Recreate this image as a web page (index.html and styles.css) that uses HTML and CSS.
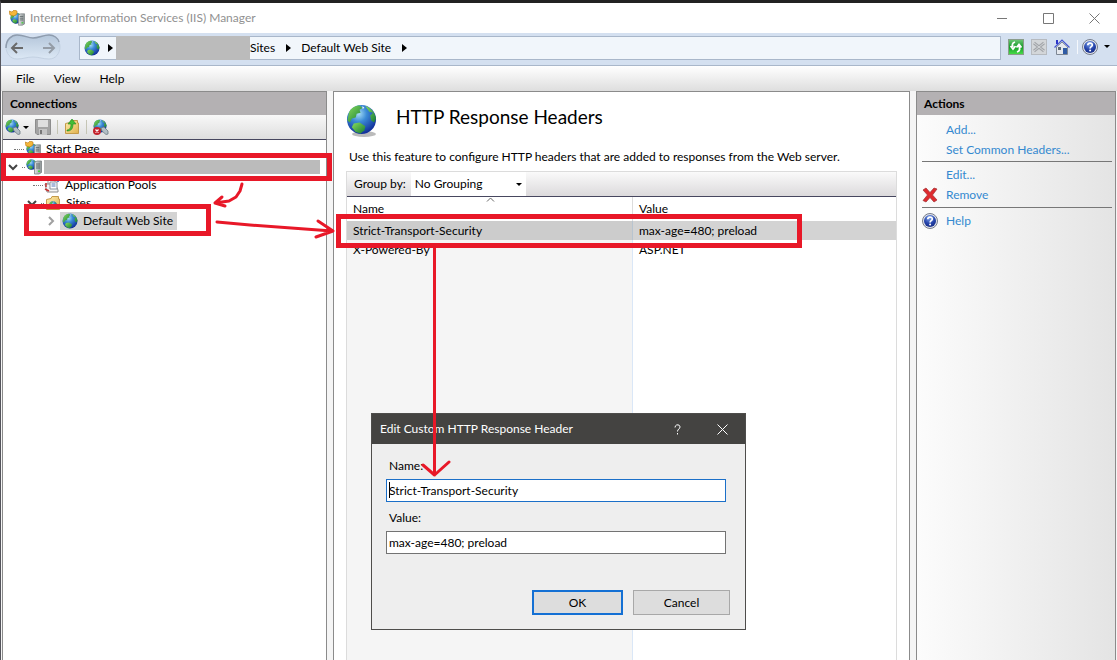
FILE: index.html
```html
<!DOCTYPE html>
<html lang="en">
<head>
    <meta charset="utf-8">
    <meta name="viewport" content="width=device-width, initial-scale=1.0">
    <title>Internet Information Services (IIS) Manager</title>
    <link rel="stylesheet" href="styles.css">
</head>
<body>
    <!-- shared icons -->
    <svg class="defs" aria-hidden="true">
        <defs>
            <radialGradient id="sea" cx="40%" cy="30%" r="70%">
                <stop offset="0" stop-color="#a8def5"/>
                <stop offset=".4" stop-color="#3b8bd6"/>
                <stop offset="1" stop-color="#12309a"/>
            </radialGradient>
            <linearGradient id="leaf" x1="0" y1="0" x2="1" y2="1">
                <stop offset="0" stop-color="#8ade5c"/>
                <stop offset="1" stop-color="#147a35"/>
            </linearGradient>
            <linearGradient id="case" x1="0" x2="1" y1="0" y2="0">
                <stop offset="0" stop-color="#dfe3e4"/>
                <stop offset="1" stop-color="#8b9394"/>
            </linearGradient>
            <linearGradient id="folder" x1="0" x2="1" y1="0" y2="1">
                <stop offset="0" stop-color="#fff0b0"/>
                <stop offset="1" stop-color="#e0b04c"/>
            </linearGradient>
            <radialGradient id="ball" cx="45%" cy="25%" r="75%">
                <stop offset="0" stop-color="#7fa5ec"/>
                <stop offset=".6" stop-color="#2746ad"/>
                <stop offset="1" stop-color="#152c85"/>
            </radialGradient>
            <linearGradient id="green" x1="0" x2="0" y1="0" y2="1">
                <stop offset="0" stop-color="#6fc878"/>
                <stop offset=".5" stop-color="#149a28"/>
                <stop offset="1" stop-color="#4be04a"/>
            </linearGradient>
            <linearGradient id="swoosh" x1="0" x2="0" y1="0" y2="1">
                <stop offset="0" stop-color="#b4c6da"/>
                <stop offset="1" stop-color="#dce8f5"/>
            </linearGradient>
            <symbol id="globe" viewBox="0 0 32 32">
                <circle cx="16" cy="16" r="15" fill="url(#sea)"/>
                <path d="M3 9C5 4 10 1.500 14 1.500L17 4 14 6 15 9 11 10 10 14 6 15 4 19 1.500 17Z" fill="url(#leaf)"/>
                <path d="M20 2C26 4 30 9 31 15L29 19 26 17 25 12 28 9 24 8Z" fill="url(#leaf)"/>
                <path d="M8 20L14 19 20 23 19 27 15 30.500 10 29 6 24Z" fill="url(#leaf)"/>
                <path d="M17 2L19 4 17 5Z" fill="#fff"/>
            </symbol>
            <symbol id="tower" viewBox="0 0 8 14">
                <path d="M.500 2L3 .500H7.500V12L5 13.500H.500Z" fill="url(#case)" stroke="#7b8284" stroke-width=".8"/>
                <path d="M2 3.500H6M2 5.500H6M2 7.500H6" stroke="#4c5557" stroke-width=".8"/>
                <rect x="4" y="10" width="2" height="1.500" fill="#45d43b"/>
            </symbol>
            <symbol id="iis" viewBox="0 0 16 16">
                <use href="#globe" x="1" y="2" width="12" height="12"/>
                <path d="M0 1L3 2 5 0 8 1 8 4 5 6 1 5Z" fill="#f5b73b" stroke="#b97814" stroke-width=".6"/>
                <use href="#tower" x="9" y="3" width="7" height="13"/>
            </symbol>
            <symbol id="server" viewBox="0 0 16 16">
                <use href="#globe" x="0" y="0" width="11" height="11"/>
                <use href="#tower" x="8" y="1" width="8" height="15"/>
            </symbol>
            <symbol id="help" viewBox="0 0 16 16">
                <circle cx="8" cy="8" r="7.500" fill="#e2e5ec" stroke="#767c8c"/>
                <circle cx="8" cy="8" r="6" fill="url(#ball)"/>
                <path d="M5.800 6.200C5.800 3.400 10.300 3.400 10.300 6C10.300 7.600 8.100 7.700 8.100 9.400" fill="none" stroke="#fff" stroke-width="1.700"/>
                <circle cx="8.100" cy="11.600" r="1" fill="#fff"/>
            </symbol>
            <symbol id="connect" viewBox="0 0 16 16">
                <use href="#globe" x="0" y="0" width="14" height="14"/>
                <path d="M8 9L11 8 15 12V15L13 15.500 9 12Z" fill="#b3bfc6" stroke="#6d7b84" stroke-width=".8"/>
            </symbol>
            <symbol id="folder-icon" viewBox="0 0 16 16">
                <path d="M1.500 4.500L6 3.500 7 1.500H13.500V4H14.500V14.500H1.500Z" fill="url(#folder)" stroke="#c49a4a"/>
            </symbol>
        </defs>
    </svg>

    <div class="window">
        <header class="titlebar">
            <svg class="icon"><use href="#iis"/></svg>
            <h1>Internet Information Services (IIS) Manager</h1>
            <div class="win-buttons">
                <button type="button" aria-label="Minimize"><svg viewBox="0 0 11 11"><path d="M0 5.500H10"/></svg></button>
                <button type="button" aria-label="Maximize"><svg viewBox="0 0 11 11"><path d="M.500 .500H10.500V10.500H.500Z"/></svg></button>
                <button type="button" aria-label="Close"><svg viewBox="0 0 11 11"><path d="M.500 .500L10.500 10.500M10.500 .500L.500 10.500"/></svg></button>
            </div>
        </header>

        <div class="navbar">
            <svg class="swoosh" viewBox="0 0 56 28">
                <path d="M12 1C20 1 22 4 28 4S38 1 44 1C51 1 55 7 55 13S51 25 44 25C38 25 34 23 28 23S18 25 12 25C5 25 1 19 1 13S5 1 12 1Z" fill="url(#swoosh)" stroke="#c3d1e2"/>
                <path d="M1 14C1 5 7 1 12 1C20 1 22 4 28 4S38 1 44 1C49 1 53 4 54 8" fill="none" stroke="#8e9cae" stroke-width="1.500"/>
                <path d="M18 14H7M12 9L7 14 12 19" fill="none" stroke="#6a6a6a" stroke-width="2"/>
                <path d="M38 14H49M44 9L49 14 44 19" fill="none" stroke="#949ca6" stroke-width="2"/>
            </svg>
            <nav class="address">
                <svg class="icon"><use href="#globe"/></svg>
                <span class="tri"></span>
                <span class="masked"></span>
                <a href="#">Sites</a>
                <span class="tri"></span>
                <a href="#">Default Web Site</a>
                <span class="tri"></span>
            </nav>
            <div class="nav-tools">
                <button type="button" aria-label="Refresh">
                    <svg class="icon" viewBox="0 0 16 16"><rect x=".500" y=".500" width="15" height="15" fill="url(#green)" stroke="#8a9c8a"/><path d="M7 3C4 4 4 6 5 8M2.500 7L5 10 7.500 7M9 13C12 12 12 10 11 7M8.500 8.500L11 5.500 13.500 8.500" fill="none" stroke="#fff" stroke-width="1.800"/></svg>
                </button>
                <button type="button" aria-label="Stop">
                    <svg class="icon" viewBox="0 0 16 16"><rect x=".500" y=".500" width="15" height="15" fill="#d3d6d9" stroke="#b6babf"/><path d="M3 4L13 12M13 4L3 12" stroke="#a3a6aa" stroke-width="3"/><path d="M3 4L13 12M13 4L3 12" stroke="#d3d6d9"/></svg>
                </button>
                <button type="button" aria-label="Home">
                    <svg class="icon" viewBox="0 0 16 16"><path d="M2 1H4V5H2Z" fill="#2b35c8"/><path d="M2.500 8L8 3 13.500 8V15.500H2.500Z" fill="#e4e8ee" stroke="#7d8794"/><path d="M.500 8.500L8 1 15.500 8.500" fill="none" stroke="#4656d0" stroke-width="1.200"/><rect x="4" y="8" width="3" height="3" fill="#5d6a76"/><rect x="9" y="9" width="4" height="6" fill="#2f5ba5"/></svg>
                </button>
                <span class="split"></span>
                <button type="button" class="wide" aria-label="Help">
                    <svg class="icon"><use href="#help"/></svg>
                    <span class="caret"></span>
                </button>
            </div>
        </div>

        <nav class="menubar">
            <a href="#">File</a>
            <a href="#">View</a>
            <a href="#">Help</a>
        </nav>

        <div class="panes">
            <section class="pane connections">
                <h2>Connections</h2>
                <div class="toolbar">
                    <button type="button" class="wide" aria-label="Connect">
                        <svg class="icon"><use href="#connect"/></svg>
                        <span class="caret"></span>
                    </button>
                    <button type="button" aria-label="Save">
                        <svg class="icon" viewBox="0 0 16 16"><path d="M.500 .500H15.500V15.500H2L.500 14Z" fill="#a3a3a3" stroke="#8d8d8d"/><path d="M3 1H13V8H3Z" fill="#dedede"/><path d="M4 10H12V16H4Z" fill="#c4c4c4"/><path d="M5 11H7V15H5Z" fill="#777"/></svg>
                    </button>
                    <span class="split"></span>
                    <button type="button" aria-label="Up">
                        <svg class="icon" viewBox="0 0 16 16"><use href="#folder-icon"/><path d="M3 11C6 11 7 8 7 5H4L8 0 12 5H9C9 10 7 12 3 12Z" fill="#43bd36" stroke="#26891e" stroke-width=".6"/></svg>
                    </button>
                    <span class="split"></span>
                    <button type="button" aria-label="Delete connection">
                        <svg class="icon" viewBox="0 0 16 16"><use href="#connect"/><circle cx="4" cy="12" r="4" fill="#c3212b"/><path d="M2.500 10.500L5.500 13.500M5.500 10.500L2.500 13.500" stroke="#fff" stroke-width="1.200"/></svg>
                    </button>
                </div>
                <ul class="tree">
                    <li class="level-1"><span class="dots"></span><svg class="icon"><use href="#iis"/></svg><span class="label">Start Page</span></li>
                    <li class="level-0">
                        <svg class="chevron open" viewBox="0 0 10 10"><path d="M1 3L5 7 9 3"/></svg>
                        <span class="dots short"></span><svg class="icon"><use href="#server"/></svg><span class="masked"></span>
                    </li>
                    <li class="level-2">
                        <span class="dots"></span>
                        <svg class="icon" viewBox="0 0 16 16"><path d="M4 1H11V9H4Z" fill="#fff" stroke="#9a9a9a"/><path d="M1 7H11L14 13V15H3Z" fill="#f4f4f4" stroke="#8b8b8b"/><path d="M6 5H13V12H6Z" fill="#fff" stroke="#8a93a0"/><path d="M7.500 7H11.500M7.500 9H11.500" stroke="#5576b8"/><path d="M10 2H14V5" fill="none" stroke="#2f57b5" stroke-width="1.500"/><path d="M1 12L5 14M2 6V10" stroke="#c63434" stroke-width="1.500"/></svg>
                        <span class="label">Application Pools</span>
                    </li>
                    <li class="level-2b">
                        <svg class="chevron open" viewBox="0 0 10 10"><path d="M1 3L5 7 9 3"/></svg>
                        <span class="dots short"></span><svg class="icon" viewBox="0 0 16 16"><use href="#folder-icon"/><use href="#globe" x="4" y="6" width="8" height="8"/></svg><span class="label">Sites</span>
                    </li>
                    <li class="level-3">
                        <svg class="chevron" viewBox="0 0 10 10"><path d="M3 1L7 5 3 9"/></svg>
                        <a class="selected" href="#"><svg class="icon"><use href="#globe"/></svg><span class="label">Default Web Site</span></a>
                    </li>
                </ul>
            </section>

            <main class="pane feature">
                <div class="feature-head">
                    <svg class="big-icon" viewBox="0 0 32 34"><ellipse cx="18" cy="30" rx="12" ry="3" fill="#bbb"/><use href="#globe" x="0" y="0" width="31" height="31"/></svg>
                    <h2>HTTP Response Headers</h2>
                </div>
                <p>Use this feature to configure HTTP headers that are added to responses from the Web server.</p>
                <div class="list">
                    <div class="group-bar">
                        <label for="group">Group by:</label>
                        <span class="pick">
                            <select id="group"><option>No Grouping</option></select>
                            <span class="caret"></span>
                        </span>
                    </div>
                    <table>
                        <thead>
                            <tr><th class="sorted">Name<svg class="sort" viewBox="0 0 9 5"><path d="M1 4.500L4.500 1 8 4.500"/></svg></th><th>Value</th></tr>
                        </thead>
                        <tbody>
                            <tr class="active"><td>Strict-Transport-Security</td><td>max-age=480; preload</td></tr>
                            <tr><td>X-Powered-By</td><td>ASP.NET</td></tr>
                            <tr class="filler"><td></td><td></td></tr>
                        </tbody>
                    </table>
                </div>
            </main>

            <aside class="pane actions">
                <h2>Actions</h2>
                <ul>
                    <li><a href="#">Add...</a></li>
                    <li><a href="#">Set Common Headers...</a></li>
                </ul>
                <ul>
                    <li><a href="#">Edit...</a></li>
                    <li><svg class="icon" viewBox="0 0 16 16"><path d="M1 3L4 1 8 5.500 12 1 15 2 10.500 8 15 13 12 15 8 10.500 4 15 1 13.500 5.500 8Z" fill="#df2b2f" stroke="#9e3034" stroke-width=".7"/></svg><a href="#">Remove</a></li>
                </ul>
                <ul>
                    <li><svg class="icon"><use href="#help"/></svg><a href="#">Help</a></li>
                </ul>
            </aside>
        </div>
    </div>

    <!-- edit dialog, floats over the window -->
    <form class="dialog" role="dialog" aria-labelledby="dialog-title">
        <div class="dialog-title">
            <h2 id="dialog-title">Edit Custom HTTP Response Header</h2>
            <button type="button" aria-label="Help"><svg viewBox="0 0 11 11"><path d="M3 3.500C3 0 8 0 8 3C8 5 5.500 5 5.500 7.500M5.500 9V10.500"/></svg></button>
            <button type="button" aria-label="Close"><svg viewBox="0 0 11 11"><path d="M.500 .500L10.500 10.500M10.500 .500L.500 10.500"/></svg></button>
        </div>
        <div class="fields">
            <label for="name">Name:</label>
            <div class="field"><input class="focused" id="name" type="text" value="Strict-Transport-Security"><span class="cursor"></span></div>
            <label for="value">Value:</label>
            <div class="field"><input id="value" type="text" value="max-age=480; preload"></div>
        </div>
        <div class="dialog-buttons">
            <button type="button" class="ok">OK</button>
            <button type="button" class="cancel">Cancel</button>
        </div>
    </form>

    <!-- red marker drawing -->
    <svg class="marker" width="810" height="490" viewBox="0 0 810 490" aria-hidden="true">
        <rect x="3.500" y="155.500" width="326" height="23"/>
        <rect x="26.500" y="206.500" width="182" height="27"/>
        <rect x="338.500" y="216.500" width="461" height="29"/>
        <g class="thin">
            <path d="M242 184L240 191 236 197 229 201 215 203M222 197L215 203 225 206"/>
            <path d="M217 222L250 225 332 231M318 221L333 231 316 237"/>
            <path d="M434.500 247V475M423 465L434.500 475 449 462"/>
        </g>
    </svg>
</body>
</html>
```
FILE: styles.css
```css
* {
    margin: 0;
    padding: 0;
    box-sizing: border-box;
}

body {
    font: 12px/18px Lato, "Open Sans", sans-serif;
    color: #000;
    position: relative;
    overflow: hidden;
}

a {
    color: inherit;
    text-decoration: none;
}

ul {
    list-style: none;
}

button {
    border: 0;
    background: none;
    font: inherit;
    color: inherit;
    display: flex;
    align-items: center;
    justify-content: center;
}

.defs {
    position: absolute;
    width: 0;
    height: 0;
}

.icon {
    width: 16px;
    height: 16px;
    flex: none;
}

.masked {
    background: #bbb;
}

.caret {
    border: 3px solid transparent;
    border-top-color: #000;
    border-bottom: 0;
}

.tri {
    border: 4px solid transparent;
    border-left: 5px solid #000;
    border-right: 0;
}

.split {
    width: 1px;
    height: 14px;
    background: #c5c5b5;
}

/* window */
.window {
    height: 100vh;
    display: flex;
    flex-direction: column;
    border-top: 3px solid #222;
    border-left: 1px solid #55555c;
    background: #f5f5f5;
}

.titlebar {
    height: 30px;
    padding-left: 8px;
    display: flex;
    align-items: center;
    background: #fff;
    color: #919191;
}

.titlebar h1 {
    flex: 1;
    margin-left: 5px;
    font-size: 12px;
    font-weight: normal;
}

.win-buttons {
    display: flex;
}

.win-buttons button {
    width: 46px;
    height: 28px;
}

.win-buttons svg,
.dialog-title svg {
    width: 11px;
    height: 11px;
    fill: none;
    stroke: #777;
}

/* back/forward, address, tools */
.navbar {
    height: 33px;
    padding: 0 7px 2px 4px;
    display: flex;
    align-items: center;
    background: #d4e0f0;
    border-bottom: 1px solid #a9b7ca;
}

.swoosh {
    width: 56px;
    height: 28px;
    flex: none;
}

.address {
    flex: 1;
    height: 24px;
    margin: 0 7px 0 18px;
    padding-left: 4px;
    display: flex;
    align-items: center;
    background: #f1f6fb;
    border: 1px solid #a9b7ca;
}

.address .tri {
    margin: 0 3px 0 8px;
}

.address a + .tri {
    margin: 0 10px 0 11px;
}

.address .masked {
    width: 134px;
    height: 24px;
}

.nav-tools {
    display: flex;
    align-items: center;
    gap: 7px;
    padding-bottom: 3px;
}

.wide {
    gap: 6px;
}

.nav-tools .split {
    background: #f5f8fc;
    margin-right: -3px;
}

.menubar {
    height: 25px;
    padding-left: 15px;
    display: flex;
    align-items: center;
    gap: 19px;
    background: linear-gradient(#fff, #dedede);
}

/* three panes */
.panes {
    flex: 1;
    min-height: 0;
    padding: 0 1px;
    display: grid;
    grid-template-columns: 325px minmax(0, 1fr) 200px;
    gap: 6px;
}

.pane {
    border: 1px solid #8b8b8b;
    border-bottom: 0;
    background: #fff;
}

.connections > h2,
.actions > h2 {
    height: 23px;
    padding-left: 7px;
    background: #b4b1b3;
    font-size: 12px;
    line-height: 24px;
}

.toolbar {
    height: 25px;
    padding-left: 2px;
    display: flex;
    align-items: center;
    gap: 6px;
    background: linear-gradient(#f8f8f8, #dedede);
    border-bottom: 1px solid #47475f;
}

.toolbar .wide {
    gap: 2px;
}

.tree li {
    height: 18px;
    display: flex;
    align-items: center;
}

.tree .label {
    margin-left: 5px;
}

.dots {
    width: 10px;
    margin-right: 1px;
    border-top: 1px dotted #777;
}

.dots.short {
    width: 3px;
}

.chevron {
    width: 10px;
    height: 10px;
    margin-right: 4px;
    flex: none;
    fill: none;
    stroke: #a0a0a0;
    stroke-width: 2;
}

.chevron.open {
    stroke: #444;
}

.level-0 {
    padding-left: 5px;
}

.level-1 {
    padding-left: 11px;
}

.level-2 {
    padding-left: 30px;
}

.level-2b {
    padding-left: 24px;
}

.level-3 {
    padding-left: 43px;
}

.tree .masked {
    width: 276px;
    height: 14px;
    margin-left: 2px;
}

.selected {
    height: 18px;
    padding: 0 4px 0 2px;
    display: flex;
    align-items: center;
    background: #d3d3d3;
}

/* feature page */
.feature {
    padding: 12px 12px 0;
    display: flex;
    flex-direction: column;
}

.feature-head {
    display: flex;
    gap: 18px;
    height: 32px;
}

.big-icon {
    width: 32px;
    height: 34px;
}

.feature-head h2 {
    font-size: 19px;
    font-weight: normal;
    line-height: 26px;
}

.feature p {
    margin: 12px 0 5px 3px;
    white-space: nowrap;
}

.list {
    flex: 1;
    display: flex;
    flex-direction: column;
    border: 1px solid #dcdcdc;
    border-bottom: 0;
}

.group-bar {
    height: 25px;
    padding-left: 7px;
    display: flex;
    gap: 5px;
    line-height: 24px;
    background: linear-gradient(#fafafa, #dcdadc);
    border-bottom: 1px solid #47475f;
}

.pick {
    position: relative;
}

.pick select {
    width: 115px;
    height: 24px;
    padding-left: 4px;
    appearance: none;
    border: 0;
    background: #fff;
    font: inherit;
}

.pick .caret {
    position: absolute;
    right: 4px;
    top: 11px;
}

table {
    flex: 1;
    display: flex;
    flex-direction: column;
}

thead {
    display: block;
}

tbody {
    flex: 1;
    display: flex;
    flex-direction: column;
}

tr {
    display: grid;
    grid-template-columns: 286px 1fr;
    height: 19px;
}

thead tr {
    height: 24px;
}

th,
td {
    padding-left: 6px;
    text-align: left;
    font-weight: normal;
    line-height: 19px;
}

th {
    line-height: 24px;
}

th:first-child {
    border-right: 1px solid #dcdcdc;
}

td:first-child {
    background: #f5f5f5;
    border-right: 1px solid #dae7f7;
}

tr.active td {
    background: #d3d3d3;
}

tr.active td:first-child {
    background: #ccc;
    border-color: #b8c4cf;
}

tr.filler {
    flex: 1;
    height: auto;
}

.sorted {
    position: relative;
}

.sort {
    position: absolute;
    left: 139px;
    top: 0;
    width: 9px;
    height: 5px;
    fill: none;
    stroke: #666;
}

/* actions */
.actions {
    background: linear-gradient(to right, #fcfcfc, #e4e4e4);
}

.actions ul {
    margin-left: 5px;
    padding: 2px 0;
    width: 190px;
}

.actions ul + ul {
    border-top: 1px solid #777;
    padding-top: 3px;
}

.actions h2 + ul {
    padding: 5px 0 1px;
}

.actions li {
    height: 20px;
    display: flex;
    align-items: center;
    gap: 8px;
    color: #3489d0;
}

.actions a:only-child {
    margin-left: 24px;
}

/* dialog */
.dialog {
    position: absolute;
    left: 371px;
    top: 413px;
    width: 375px;
    height: 217px;
    background: #eee;
    border: 1px solid #4e4d4b;
}

.dialog-title {
    height: 30px;
    padding-left: 8px;
    display: flex;
    align-items: center;
    background: #444341;
    color: #fff;
}

.dialog-title h2 {
    flex: 1;
    font-size: 12px;
    font-weight: normal;
}

.dialog-title button {
    width: 45px;
    height: 28px;
}

.dialog-title svg {
    stroke: #fff;
}

.fields {
    padding: 13px 19px 0 14px;
}

.fields label {
    display: block;
    margin-left: 3px;
}

.field {
    position: relative;
    margin: 4px 0 7px;
}

.field input {
    display: block;
    width: 100%;
    height: 23px;
    padding: 0 2px;
    border: 1px solid #737373;
    background: #fff;
    font: inherit;
}

.field input.focused {
    border-color: #1b6fc8;
}

.cursor {
    position: absolute;
    left: 3px;
    top: 3px;
    width: 1px;
    height: 16px;
    background: #000;
}

.dialog-buttons {
    margin: 36px 15px 0 0;
    display: flex;
    justify-content: flex-end;
    gap: 10px;
}

.dialog-buttons button {
    height: 25px;
    background: #ddd;
    border: 1px solid #a8a8a8;
}

.dialog-buttons .ok {
    width: 91px;
    border: 2px solid #1470d4;
}

.dialog-buttons .cancel {
    width: 97px;
}

/* red marker */
.marker {
    position: absolute;
    left: 0;
    top: 0;
    fill: none;
    stroke: #e81828;
    stroke-width: 5;
    pointer-events: none;
}

.marker .thin {
    stroke-width: 3;
    stroke-linecap: round;
    stroke-linejoin: round;
}
```
